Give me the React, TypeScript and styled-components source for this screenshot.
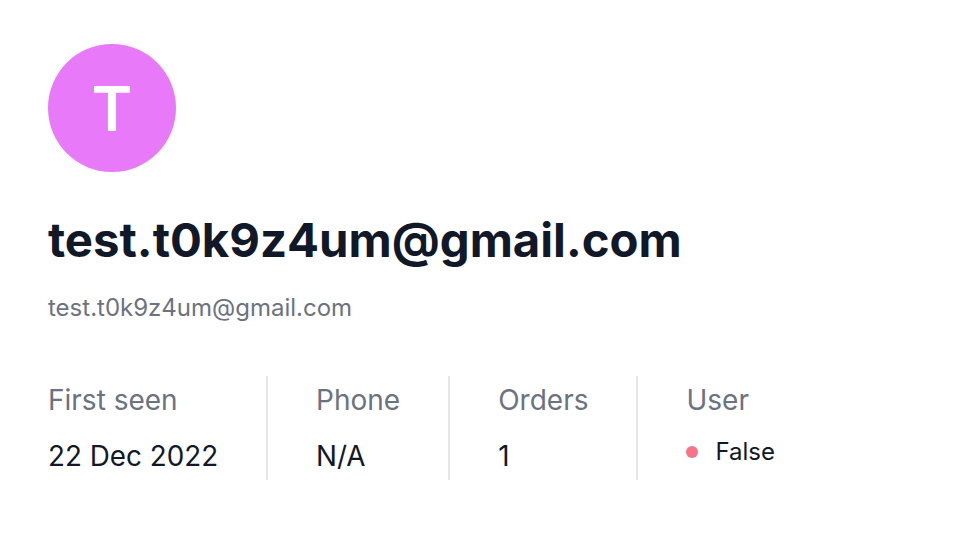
import React from 'react';
import styled, { createGlobalStyle } from 'styled-components';

const GlobalStyle = createGlobalStyle`
  html, body {
    margin: 0;
    padding: 0;
    background: #ffffff;
    font-family: Inter, "Noto Sans", sans-serif;
  }
`;

const Page = styled.div`
  padding: 44px 48px;
  display: flex;
  flex-direction: column;
  align-items: flex-start;
`;

const Avatar = styled.div`
  width: 128px;
  height: 128px;
  border-radius: 50%;
  background: #e879f9;
  color: #ffffff;
  display: flex;
  align-items: center;
  justify-content: center;
  font-size: 62px;
  font-weight: 600;
`;

const Title = styled.h1`
  margin: 39px 0 0;
  font-size: 47.3px;
  line-height: 57px;
  font-weight: 700;
  color: #111827;
`;

const Subtitle = styled.div`
  margin-top: 24px;
  font-size: 24px;
  line-height: 32px;
  color: #6b7280;
`;

const Stats = styled.div`
  display: flex;
  margin-top: 52px;
`;

const Stat = styled.div<{ $first?: boolean }>`
  display: flex;
  flex-direction: column;
  padding: 0 48px;
  padding-left: ${p => (p.$first ? '0' : '48px')};
  border-left: ${p => (p.$first ? 'none' : '2px solid #e5e7eb')};
  height: 104px;
`;

const Label = styled.div`
  margin-top: 6px;
  font-size: 28px;
  line-height: 36px;
  color: #6b7280;
`;

const Value = styled.div`
  margin-top: 20px;
  font-size: 27.8px;
  line-height: 36px;
  color: #111827;
`;

const Status = styled.div`
  margin-top: 16px;
  display: flex;
  align-items: center;
  gap: 17px;
  font-size: 24px;
  line-height: 36px;
  color: #111827;
`;

const Dot = styled.span`
  width: 12px;
  height: 12px;
  border-radius: 50%;
  background: #fb7185;
`;

export default function App() {
  return (
    <>
      <GlobalStyle />
      <Page>
        <Avatar>T</Avatar>
        <Title>test.t0k9z4um@gmail.com</Title>
        <Subtitle>test.t0k9z4um@gmail.com</Subtitle>
        <Stats>
          <Stat $first>
            <Label>First seen</Label>
            <Value>22 Dec 2022</Value>
          </Stat>
          <Stat>
            <Label>Phone</Label>
            <Value>N/A</Value>
          </Stat>
          <Stat>
            <Label>Orders</Label>
            <Value>1</Value>
          </Stat>
          <Stat>
            <Label>User</Label>
            <Status>
              <Dot />
              False
            </Status>
          </Stat>
        </Stats>
      </Page>
    </>
  );
}
